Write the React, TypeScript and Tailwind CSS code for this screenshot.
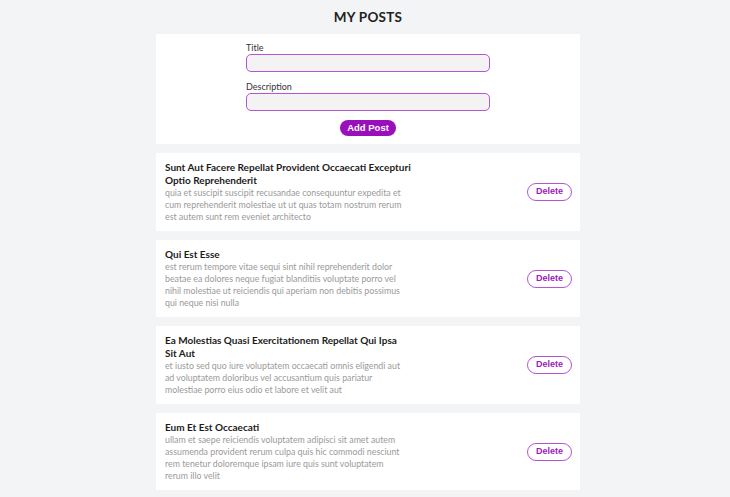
import { useState } from "react";

type Post = { id: number; title: string; body: string };

const initialPosts: Post[] = [
  {
    id: 1,
    title: "Sunt Aut Facere Repellat Provident Occaecati Excepturi Optio Reprehenderit",
    body: "quia et suscipit suscipit recusandae consequuntur expedita et cum reprehenderit molestiae ut ut quas totam nostrum rerum est autem sunt rem eveniet architecto",
  },
  {
    id: 2,
    title: "Qui Est Esse",
    body: "est rerum tempore vitae sequi sint nihil reprehenderit dolor beatae ea dolores neque fugiat blanditiis voluptate porro vel nihil molestiae ut reiciendis qui aperiam non debitis possimus qui neque nisi nulla",
  },
  {
    id: 3,
    title: "Ea Molestias Quasi Exercitationem Repellat Qui Ipsa Sit Aut",
    body: "et iusto sed quo iure voluptatem occaecati omnis eligendi aut ad voluptatem doloribus vel accusantium quis pariatur molestiae porro eius odio et labore et velit aut",
  },
  {
    id: 4,
    title: "Eum Et Est Occaecati",
    body: "ullam et saepe reiciendis voluptatem adipisci sit amet autem assumenda provident rerum culpa quis hic commodi nesciunt rem tenetur doloremque ipsam iure quis sunt voluptatem rerum illo velit",
  },
];

export default function App() {
  const [posts, setPosts] = useState(initialPosts);
  const [title, setTitle] = useState("");
  const [description, setDescription] = useState("");

  function addPost() {
    if (!title) return;
    setPosts([{ id: Date.now(), title, body: description }, ...posts]);
    setTitle("");
    setDescription("");
  }

  return (
    <main className="min-h-screen bg-[#f3f4f6] pb-4 pl-[6px] font-['Lato',sans-serif] text-[#1f1f1f]">
      <h1 className="pt-[9px] pb-[8px] text-center text-[13.5px] leading-[17px] font-bold tracking-[0.02em] text-[#222]">
        MY POSTS
      </h1>

      <div className="mx-auto flex w-[424px] flex-col gap-[9px]">
        <section className="flex flex-col items-center bg-white pt-[8px] pb-[8px]">
          <div className="flex w-[244px] flex-col">
            <label className="text-[9px] leading-[12px] text-[#333]">Title</label>
            <input
              value={title}
              onChange={(e) => setTitle(e.target.value)}
              className="h-[18px] rounded-[5px] border border-[#b455d6] bg-[#f3f3f3] px-2 text-[10px] outline-none"
            />
            <label className="mt-[9px] text-[9px] leading-[12px] text-[#333]">Description</label>
            <input
              value={description}
              onChange={(e) => setDescription(e.target.value)}
              className="h-[18px] rounded-[5px] border border-[#b455d6] bg-[#f3f3f3] px-2 text-[10px] outline-none"
            />
          </div>
          <button
            onClick={addPost}
            className="mt-[9px] h-[16px] rounded-full bg-[#9a0fbd] px-[7px] font-['Liberation_Sans',sans-serif] text-[9.5px] leading-[16px] font-bold text-white"
          >
            Add Post
          </button>
        </section>

        {posts.map((post) => (
          <article key={post.id} className="flex items-center justify-between bg-white py-[8px] pr-[8px] pl-[9px]">
            <div className="w-[246px]">
              <h2 className="text-[10px] leading-[13px] font-bold text-[#1c1c1c]">{post.title}</h2>
              <p className="max-w-[240px] text-[8.8px] leading-[12px] text-[#9a9a9a]">{post.body}</p>
            </div>
            <button
              onClick={() => setPosts(posts.filter((p) => p.id !== post.id))}
              className="h-[18px] w-[45px] rounded-full border border-[#b455d6] font-['Liberation_Sans',sans-serif] text-[9px] font-bold text-[#9a1bbd]"
            >
              Delete
            </button>
          </article>
        ))}
      </div>
    </main>
  );
}
